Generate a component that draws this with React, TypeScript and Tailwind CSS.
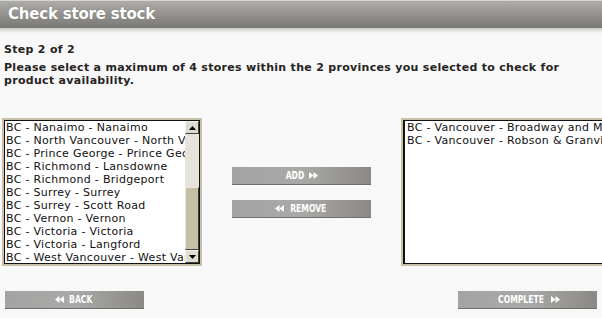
import React from 'react';

const leftStores = [
  'BC - Nanaimo - Nanaimo',
  'BC - North Vancouver - North Vancouver',
  'BC - Prince George - Prince George',
  'BC - Richmond - Lansdowne',
  'BC - Richmond - Bridgeport',
  'BC - Surrey - Surrey',
  'BC - Surrey - Scott Road',
  'BC - Vernon - Vernon',
  'BC - Victoria - Victoria',
  'BC - Victoria - Langford',
  'BC - West Vancouver - West Vancouver',
];

const rightStores = ['BC - Vancouver - Broadway and Maple', 'BC - Vancouver - Robson & Granville'];

const Arrows = ({ dir }: { dir: 'left' | 'right' }) => (
  <svg width="9" height="7" viewBox="0 0 9 7" className={dir === 'left' ? 'rotate-180' : ''}>
    <polygon points="0,0 4.5,3.5 0,7" fill="white" />
    <polygon points="4.5,0 9,3.5 4.5,7" fill="white" />
  </svg>
);

const GreyButton = ({ label, arrow }: { label: string; arrow: 'left' | 'right' }) => (
  <button className="flex h-[18px] w-[139px] items-center justify-center gap-[4px] border-b border-[#6e6e6c] bg-gradient-to-r from-[#a3a3a3] via-[#a9a9a7] to-[#8b8985] font-['DejaVu_Sans_Condensed',sans-serif] text-[10px] font-bold text-white">
    {arrow === 'left' && <Arrows dir="left" />}
    <span className="-mx-[1px] inline-block scale-x-[0.85]">{label}</span>
    {arrow === 'right' && <Arrows dir="right" />}
  </button>
);

const ScrollArrow = ({ up }: { up?: boolean }) => (
  <div className="flex h-[13px] w-[14px] items-center justify-center border border-t-[#f4f2ea] border-l-[#f4f2ea] border-r-[#404040] border-b-[#404040] bg-[#dedbd0]">
    <svg width="7" height="4" viewBox="0 0 7 4" className={up ? '' : 'rotate-180'}>
      <polygon points="0,4 3.5,0 7,4" fill="#000" />
    </svg>
  </div>
);

export default function App() {
  return (
    <div className="h-[318px] w-[602px] overflow-hidden bg-[#f8f8f8] font-['DejaVu_Sans',Verdana,sans-serif]">
      {/* Header */}
      <div className="h-[28px] border-t border-[#d8d6d2] bg-gradient-to-b from-[#aeaca8] to-[#7a7874] pl-[8px] text-[15px] leading-[27px] font-bold tracking-[-0.2px] text-white [text-shadow:0_0_1px_rgba(0,0,0,0.3)]">
        Check store stock
      </div>
      <div className="h-[5px] bg-gradient-to-b from-[#c9c9c9] to-[#f8f8f8]" />

      <div className="pl-[4px] pt-[10px] text-[11px] leading-[13px] font-bold tracking-[0.3px] text-[#262422]">
        <div>Step 2 of 2</div>
        <div className="mt-[5px]">
          Please select a maximum of 4 stores within the 2 provinces you selected to check for
          <br />
          product availability.
        </div>
      </div>

      {/* Lists + add/remove */}
      <div className="mt-[31px] flex">
        <div className="ml-[2px] h-[148px] w-[200px] shrink-0 border-2 border-[#c6c2aa]">
          <div className="flex h-full border border-[#111]">
            <div className="flex-1 overflow-hidden bg-white pl-[1px]">
              {leftStores.map((s) => (
                <div key={s} className="h-[13px] whitespace-nowrap text-[11px] leading-[13px] tracking-[0.3px] text-[#111]">
                  {s}
                </div>
              ))}
            </div>
            <div className="flex w-[14px] flex-col bg-[#e6e4da]">
              <ScrollArrow up />
              <div className="flex-1" />
              <div className="h-[63px] border border-t-[#eceadf] border-l-[#eceadf] border-r-[#404040] border-b-[#404040] bg-[#c4c0a8]" />
              <ScrollArrow />
            </div>
          </div>
        </div>

        <div className="ml-[30px] flex shrink-0 flex-col gap-[15px] pt-[49px]">
          <GreyButton label="ADD" arrow="right" />
          <GreyButton label="REMOVE" arrow="left" />
        </div>

        <div className="ml-[30px] h-[148px] w-[220px] shrink-0 border-2 border-[#c6c2aa]">
          <div className="h-full overflow-hidden border border-l-2 border-[#111] bg-white pl-[2px]">
            {rightStores.map((s) => (
              <div key={s} className="h-[13px] whitespace-nowrap text-[11px] leading-[13px] tracking-[0.3px] text-[#111]">
                {s}
              </div>
            ))}
          </div>
        </div>
      </div>

      {/* Footer buttons */}
      <div className="mt-[25px] flex justify-between pl-[5px] pr-[5px]">
        <GreyButton label="BACK" arrow="left" />
        <GreyButton label="COMPLETE" arrow="right" />
      </div>
    </div>
  );
}
